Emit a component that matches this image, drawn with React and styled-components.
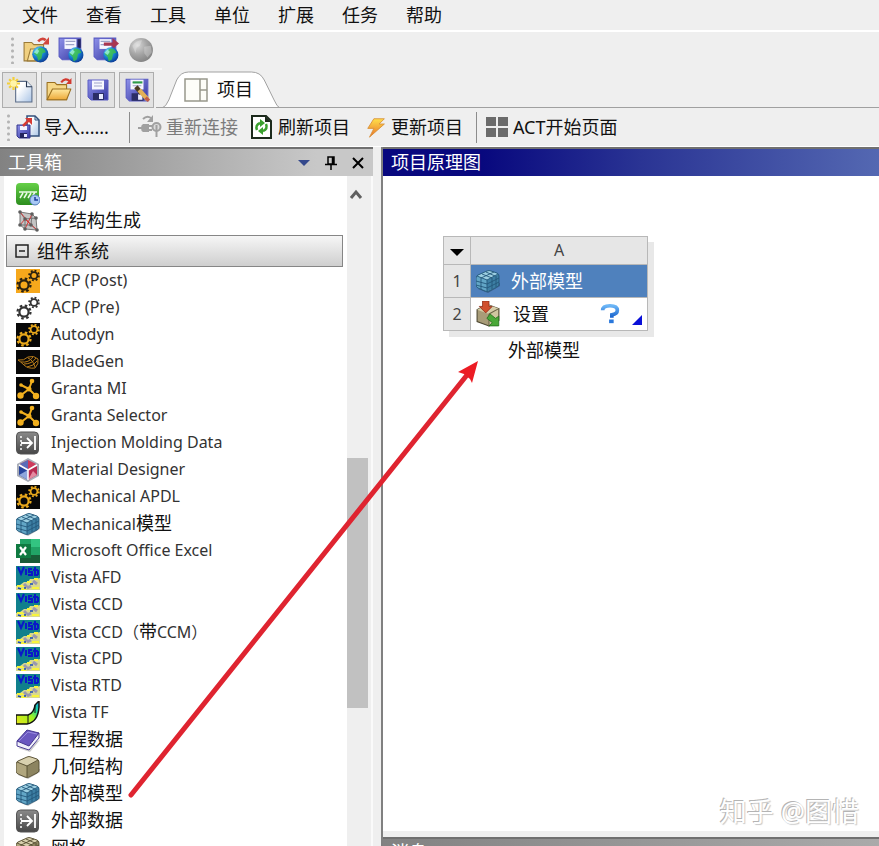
import React from 'react';
import styled, { createGlobalStyle } from 'styled-components';

const GlobalStyle = createGlobalStyle`
  * {
    box-sizing: border-box;
  }

  body {
    margin: 0;
    background: #efefef;
    color: #111;
    font-family: 'Noto Sans', 'Noto Sans CJK SC', sans-serif;
    font-size: 18px;
    line-height: 27px;
  }

  button {
    font: inherit;
    color: inherit;
    background: none;
    border: 0;
    padding: 0;
  }

  svg {
    display: block;
    flex: none;
  }
`;

/* ---------- icons ---------- */

const Icon = ({ size = 24, children }) => (
  <svg width={size} height={size} viewBox="0 0 24 24" aria-hidden="true">
    {children}
  </svg>
);

const Defs = styled.svg`
  position: absolute;
`;

const Gradients = () => (
  <Defs width="0" height="0" aria-hidden="true">
    <defs>
      <radialGradient id="globe" cx="0.35" cy="0.3" r="0.8">
        <stop offset="0" stopColor="#8df" />
        <stop offset="0.45" stopColor="#1787d6" />
        <stop offset="1" stopColor="#0a2f8c" />
      </radialGradient>
      <radialGradient id="globeGrey" cx="0.35" cy="0.3" r="0.8">
        <stop offset="0" stopColor="#d8d8d8" />
        <stop offset="0.5" stopColor="#a4a4a4" />
        <stop offset="1" stopColor="#7e7e7e" />
      </radialGradient>
      <linearGradient id="disk" x1="0" y1="0" x2="1" y2="1">
        <stop offset="0" stopColor="#8f92ea" />
        <stop offset="1" stopColor="#3436a0" />
      </linearGradient>
      <linearGradient id="folder" x1="0" y1="0" x2="0" y2="1">
        <stop offset="0" stopColor="#ffe9a0" />
        <stop offset="1" stopColor="#eda938" />
      </linearGradient>
      <linearGradient id="paper" x1="0" y1="0" x2="1" y2="1">
        <stop offset="0.3" stopColor="#fff" />
        <stop offset="1" stopColor="#a9c4e6" />
      </linearGradient>
      <linearGradient id="green" x1="0" y1="0" x2="0" y2="1">
        <stop offset="0" stopColor="#66d048" />
        <stop offset="1" stopColor="#2c8d1e" />
      </linearGradient>
      <linearGradient id="slate" x1="0" y1="0" x2="0" y2="1">
        <stop offset="0" stopColor="#8a8a8a" />
        <stop offset="1" stopColor="#474747" />
      </linearGradient>
      <linearGradient id="bolt" x1="0" y1="0" x2="0" y2="1">
        <stop offset="0" stopColor="#ffe14a" />
        <stop offset="1" stopColor="#e8702a" />
      </linearGradient>
      <linearGradient id="help" x1="0" y1="0" x2="0" y2="1">
        <stop offset="0" stopColor="#6cb6f6" />
        <stop offset="1" stopColor="#1560cc" />
      </linearGradient>
      <linearGradient id="duct" x1="0" y1="1" x2="1" y2="0">
        <stop offset="0" stopColor="#e8e61a" />
        <stop offset="0.5" stopColor="#a0f020" />
        <stop offset="0.75" stopColor="#18d8a0" />
        <stop offset="1" stopColor="#1890e8" />
      </linearGradient>
    </defs>
  </Defs>
);

const Globe = ({ cx = 16, cy = 16, r = 7.5 }) => (
  <g>
    <circle cx={cx} cy={cy} r={r} fill="url(#globe)" />
    <path
      d={`M${cx - 1} ${cy - 6}q5 0 6 4l-3 1-1 5-3 2-1-4-3-3z`}
      fill="#3cc04a"
      opacity="0.85"
    />
    <path d={`M${cx - 6} ${cy - 2}l3-3 2 2-2 3z`} fill="#9df0e0" opacity="0.8" />
  </g>
);

const Disk = () => (
  <g>
    <path d="M2 2h20v20H5l-3-3z" fill="url(#disk)" stroke="#5a5cc4" />
    <path d="M6 2.500h12v9H6z" fill="#f6f7ff" />
    <path d="M8 5h8M8 8h8" stroke="#9fa4c8" />
    <path d="M7 15h11v7H7z" fill="#2b2d66" />
    <path d="M13 16h4v5h-4z" fill="#e8eaff" />
  </g>
);

const FolderGlobeIcon = () => (
  <Icon size={26}>
    <path d="M1 5h7l2 2h9v15H1z" fill="#f0d080" stroke="#9a7a38" />
    <path d="M4 22l3-11h14l-4 11z" fill="#f8e2a0" stroke="#9a7a38" />
    <path d="M14 4q4-4 7-1" fill="none" stroke="#d2453c" strokeWidth="2.500" />
    <path d="M24 0v7h-6z" fill="#d2453c" />
    <Globe />
  </Icon>
);

const DiskGlobeIcon = ({ arrow }) => (
  <Icon size={26}>
    <path d="M1 1h20v20H4l-3-3z" fill="url(#disk)" stroke="#5a5cc4" />
    <path d="M6 2h11v9H6z" fill="#f6f7ff" />
    <path d="M7 4h9M7 7h8" stroke="#9fa4c8" />
    {arrow ? (
      <path d="M10 5h8V1l6 5-6 5V8h-8z" fill="#a83650" />
    ) : (
      <path d="M18 2h3v8h-3z" fill="#23255e" />
    )}
    <Globe cx={16.500} cy={16.500} r={7} />
  </Icon>
);

const GreyGlobeIcon = () => (
  <Icon size={26}>
    <circle cx="12" cy="12" r="11" fill="url(#globeGrey)" />
    <path d="M4 8q4-5 9-5l-2 5-3 2-1 5zM15 9l6-1 1 6-4 5-3-4z" fill="#fff" opacity="0.25" />
  </Icon>
);

const NewIcon = () => (
  <Icon size={26}>
    <path d="M8 4h10l5 5v14H8z" fill="url(#paper)" stroke="#5a6c88" />
    <path d="M18 4v5h5" fill="#e8f0fa" stroke="#24344e" />
    <path d="M6 0v12M0 6h12M2 2l8 8M10 2l-8 8" stroke="#f4cf3a" strokeWidth="2" />
    <circle cx="6" cy="6" r="3" fill="#fff4a8" />
  </Icon>
);

const OpenIcon = () => (
  <Icon size={26}>
    <g stroke="#9a7020" strokeLinejoin="round">
      <path d="M1 5h7l2 2h9v14H1z" fill="#f6d888" />
      <path d="M6 11h17l-4 10H1z" fill="url(#folder)" />
      <path d="M14 5q4-5 8-1" fill="none" stroke="#d23a30" strokeWidth="2" />
      <path d="M23.500 1v5.500h-5z" fill="#d23a30" stroke="none" />
    </g>
  </Icon>
);

const SaveIcon = () => (
  <Icon>
    <Disk />
  </Icon>
);

const SaveAsIcon = () => (
  <Icon size={26}>
    <Disk />
    <path d="M8 5h9" stroke="#2e9c4a" strokeWidth="2" />
    <path d="M11 9l5 6" stroke="#4a3c24" strokeWidth="4" />
    <path d="M14 12l8 9" stroke="#e2b057" strokeWidth="4" />
    <path d="M20 19l3 3" stroke="#c05a4a" strokeWidth="3" />
  </Icon>
);

const LayoutIcon = () => (
  <Icon>
    <path d="M1 1h22v22H1zM16 1v22M16 12h7" fill="#fdfdf8" stroke="#98988c" strokeWidth="1.500" />
  </Icon>
);

const ImportIcon = () => (
  <Icon>
    <path d="M11 1h8l4 4v16H11z" fill="url(#paper)" stroke="#33507c" strokeWidth="1.500" />
    <path d="M19 1v4h4" fill="none" stroke="#33507c" />
    <path d="M1 10h13v13H3l-2-2z" fill="url(#disk)" stroke="#35378c" />
    <path d="M4 11h7v4H4z" fill="#f2f3ff" />
    <path d="M4 18h7v5H4z" fill="#23255e" />
    <path d="M8 19h3v3H8z" fill="#e8eaff" />
    <path d="M7 11l6-6" stroke="#d63b34" strokeWidth="2.500" />
    <path d="M9 3h7v7z" fill="#d63b34" />
  </Icon>
);

const ReconnectIcon = () => (
  <Icon>
    <g fill="#a0a0a0" stroke="#a0a0a0">
      <path d="M5 9h6v8H5q-2-1-2-4t2-4z" stroke="none" />
      <path d="M0 13h5M11 11h3M11 15h3" strokeWidth="2" />
      <path d="M5 4q4-4 8-1" fill="none" strokeWidth="2" />
      <path d="M15 0v7H9z" stroke="none" />
      <circle cx="18.500" cy="12" r="4" fill="#dcdcdc" strokeWidth="2" />
      <path d="M18.500 10v12" strokeWidth="2" />
    </g>
  </Icon>
);

const RefreshIcon = () => (
  <Icon>
    <path d="M2 1h14l5 5v17H2z" fill="#fff" stroke="#1c2a1c" strokeWidth="2" />
    <path d="M15 1v6h6z" fill="#1c2a1c" />
    <path d="M7 15q-2-5 3-7M16 9q2 5-3 7" fill="none" stroke="#3aa02e" strokeWidth="2.500" />
    <path d="M10 4l5 4-5 4zM13 12v8l-5-4z" fill="#3aa02e" />
  </Icon>
);

const BoltIcon = () => (
  <Icon size={21}>
    <path d="M9 2h12l-6 6h6L4 23l5-10H2z" fill="url(#bolt)" stroke="#d89038" strokeLinejoin="round" />
  </Icon>
);

const TilesIcon = () => (
  <Icon>
    <path d="M1 2h10v9H1zM13 2h10v9H13zM1 13h10v9H1zM13 13h10v9H13z" fill="#6b6b6b" />
  </Icon>
);

const MotionIcon = () => (
  <Icon>
    <rect x="0" y="1" width="23" height="22" rx="4" fill="url(#green)" />
    <path d="M3 10h18M4 16l3-5M8 16l3-5M12 16l3-5M16 15l3-5" stroke="#eafbe6" strokeWidth="1.500" />
    <circle cx="19" cy="18" r="5" fill="#a8c8f4" stroke="#5a82c8" />
    <path d="M19 15v3h3" fill="none" stroke="#1c3c9c" strokeWidth="1.500" />
  </Icon>
);

const substructureNodes = [[4, 3], [16, 5], [20, 9], [21, 21], [9, 20], [4, 16], [9, 10], [15, 16]];

const SubstructureIcon = () => (
  <Icon>
    <path d="M4 3l12 2 4 4 1 12-12-1-5-4z" fill="#c4c4c4" stroke="#777" />
    <path d="M4 3l5 7 11-1M9 10v10M16 5l-1 11 6 5M15 16H4" fill="none" stroke="#777" />
    <path d="M4 3l11 13M9 10l12 11M16 5L9 20M4 16l5-6 6 6" fill="none" stroke="#d23c3c" />
    <g fill="#5e5e5e">
      {substructureNodes.map(([x, y]) => (
        <circle key={`${x}-${y}`} cx={x} cy={y} r="1.800" />
      ))}
    </g>
  </Icon>
);

const GearsIcon = ({ bg, color }) => (
  <Icon>
    <path d="M0 0h24v24H0z" fill={bg} />
    <g fill="none" stroke={color}>
      <circle cx="8" cy="16" r="4.600" strokeWidth="2.200" />
      <circle cx="8" cy="16" r="6.500" strokeWidth="2.200" strokeDasharray="2.550 2.550" />
      <circle cx="18" cy="6.500" r="3.400" strokeWidth="1.800" />
      <circle cx="18" cy="6.500" r="4.900" strokeWidth="1.800" strokeDasharray="1.920 1.920" />
    </g>
  </Icon>
);

const BladeIcon = () => (
  <Icon>
    <path d="M0 0h24v24H0z" fill="#080808" />
    <g fill="none" stroke="#b87c1a">
      <path d="M2 10q6 1 10-3 6-2 10 2 1 5-3 9-7 1-11-3-3-3-6-5z" />
      <path d="M5 12q8 1 12-5M8 14q8 0 12-6M11 17q7-1 10-6M12 8q5 2 7 9" />
    </g>
  </Icon>
);

const GrantaIcon = () => (
  <Icon>
    <path d="M0 0h24v24H0z" fill="#080808" />
    <path d="M4 19l9-7 7 7M13 12l3-8M13 12L5 8" stroke="#f2b01e" strokeWidth="2" fill="none" />
    <g fill="#f2b01e">
      <circle cx="4.500" cy="18.500" r="3.200" />
      <circle cx="20" cy="19" r="3.200" />
      <circle cx="16" cy="4" r="2.300" />
      <circle cx="5" cy="8" r="1.800" />
      <circle cx="13" cy="12" r="2.500" />
    </g>
  </Icon>
);

const DataArrowIcon = () => (
  <Icon>
    <rect x="0.500" y="1" width="22" height="22" rx="4" fill="url(#slate)" stroke="#555" />
    <path d="M5 5v14" stroke="#fff" strokeWidth="1.500" strokeDasharray="2 2" />
    <path d="M5 12h10M11 7l5 5-5 5" fill="none" stroke="#fff" strokeWidth="1.800" />
    <path d="M19 5v14" stroke="#fff" strokeWidth="1.800" />
  </Icon>
);

const MaterialIcon = () => (
  <Icon>
    <path d="M12 0l11 6v12l-11 6-11-6V6z" fill="#a9adb8" />
    <path d="M12 2l8 4-8 6-8-6z" fill="#cf3a5c" />
    <path d="M3 7l9 5v10l-9-5z" fill="#27449c" />
    <path d="M21 7l-9 5v10l9-5z" fill="#b82a50" />
    <path d="M12 2v10L4 6z" fill="#5a6cb8" />
    <path d="M3 17l9-5v10z" fill="#8fa6dc" />
    <path d="M12 22l9-5-4-4z" fill="#e48aa0" />
    <path d="M12 12v10M12 12l9-5M12 12L3 7" stroke="#fff" strokeWidth="1.500" />
  </Icon>
);

const palettes = {
  blue: { top: '#9ccfe2', left: '#62a6c6', right: '#3d7fa4', line: '#24587a' },
  tan: { top: '#d8d0ae', left: '#b0a67e', right: '#8c8460', line: '#544c30' },
};

const BlockIcon = ({ tone = 'tan', mesh }) => {
  const c = palettes[tone];
  return (
    <Icon>
      <path d="M2 20l10 4 12-7v-3z" fill="#000" opacity="0.25" />
      <path d="M0 9q0-2 2-3l9-4q2-1 4 0l6 2q2 1 2 3v8q0 2-2 3l-8 4q-2 1-4 0l-7-3q-2-1-2-3z" fill={c.left} />
      <path d="M1 7l10-5q2-1 4 0l7 3-10 6z" fill={c.top} />
      <path d="M11 11l12-6v10q0 2-2 3l-10 4z" fill={c.right} />
      <path
        d="M0 9q0-2 2-3l9-4q2-1 4 0l6 2q2 1 2 3v8q0 2-2 3l-8 4q-2 1-4 0l-7-3q-2-1-2-3zM1 7l10 4 11-6M11 11v11"
        fill="none"
        stroke={c.line}
        strokeWidth="0.900"
      />
      {mesh && (
        <path
          d="M0 12l11 3 12-6M0 16l11 3 12-6M5 9v11M16 9v11M20 7v11M6 5l10 4M10 3l9 4M5 9l13-6"
          fill="none"
          stroke={c.line}
          strokeWidth="0.900"
        />
      )}
    </Icon>
  );
};

const SetupIcon = () => (
  <Icon size={26}>
    <path d="M1 8l9-5 11 4v11l-9 5-11-4z" fill="#a89c78" stroke="#4c4630" />
    <path d="M1 8l9-5 11 4-9 5z" fill="#d6cda8" />
    <path d="M12 12l9-5v11l-9 5z" fill="#cfc6a0" stroke="#6c6448" />
    <path d="M6 0h6v5h3l-6 6-6-6h3z" fill="#d0502e" stroke="#8c2c18" strokeWidth="0.700" />
    <path d="M13 12l5 4 3-2v9h-9l3-3-5-4z" fill="#4aa838" stroke="#216c1a" strokeWidth="0.700" />
  </Icon>
);

const ExcelIcon = () => (
  <Icon>
    <path d="M4 0h20v24H4z" fill="#21a366" />
    <path d="M15 0h9v8h-9z" fill="#33c481" />
    <path d="M4 8h11v8H4z" fill="#107c41" />
    <path d="M4 16h20v8H4z" fill="#185c37" />
    <path d="M15 8h9v8h-9z" fill="#21a366" />
    <path d="M0 5h15v14H0z" fill="#0f7a41" />
    <path d="M4 8l6 8M10 8l-6 8" stroke="#fff" strokeWidth="2.200" />
  </Icon>
);

const VistaIcon = () => (
  <Icon>
    <path d="M0 0h24v24H0z" fill="#10808c" />
    <path
      d="M2 1l3 7 3-7M10 3v6M16 3h-3v3h3v3h-4M19 1v8h3M22 4v5M17 4h5"
      fill="none"
      stroke="#0a18c8"
      strokeWidth="2"
    />
    <path d="M0 24v-4l4-1 4-3h4l2-3h6l4-1v12z" fill="#d8d890" />
    <path d="M1 20h8M3 23h7M11 16h4M16 22h7M18 13h4" stroke="#f8f43c" strokeWidth="2" />
    <path d="M8 18l3 3M17 15l4 3M11 22l4-2" stroke="#9a98b0" strokeWidth="3" />
    <path d="M2 22l3 1M14 18h3M8 22h2" stroke="#1648b8" strokeWidth="1.500" />
  </Icon>
);

const DuctIcon = () => (
  <Icon>
    <path
      d="M0 14h12q6-2 7-10l4-4v6q-1 15-12 17H0z"
      fill="url(#duct)"
      stroke="#111"
      strokeWidth="1.500"
    />
    <path d="M12 14v9M19 4v8" stroke="#111" />
  </Icon>
);

const BookIcon = () => (
  <Icon>
    <path d="M2 20l12 4 10-12z" fill="#000" opacity="0.2" />
    <path d="M1 13v5l12 4 10-12V5z" fill="#f0f0fa" stroke="#4c3f96" />
    <path d="M1 13L11 2l12 3-10 13z" fill="#6a58c0" stroke="#453890" />
    <path d="M3 13l9-9 9 2" fill="none" stroke="#9a8ce0" />
  </Icon>
);

const HelpIcon = () => (
  <Icon size={22}>
    <path
      d="M4 8q0-5 8-5t8 5q0 4-6 5v3"
      fill="none"
      stroke="url(#help)"
      strokeWidth="4"
    />
    <path d="M11 18h5v4h-5z" fill="#2a78dc" />
  </Icon>
);

const PinIcon = () => (
  <svg width="14" height="14" viewBox="0 0 14 14" aria-hidden="true">
    <path d="M4 1h6v7H4zM8.500 1v7M1 8.500h12M7 9v5" fill="none" stroke="#000" strokeWidth="1.500" />
  </svg>
);

const CloseIcon = () => (
  <svg width="12" height="12" viewBox="0 0 12 12" aria-hidden="true">
    <path d="M1 1l10 10M11 1L1 11" stroke="#000" strokeWidth="2" />
  </svg>
);

/* ---------- layout ---------- */

const Window = styled.div`
  position: relative;
  display: flex;
  flex-direction: column;
  height: 100vh;
  overflow: hidden;
`;

const MenuBar = styled.nav`
  display: flex;
  height: 32px;
  padding: 0 8px;
  border-bottom: 2px solid #fff;
`;

const MenuItem = styled.button`
  padding: 0 14px;
`;

const Toolbar = styled.div`
  display: flex;
  align-items: center;
  height: 38px;
`;

const QuickBar = styled(Toolbar)`
  width: 162px;
  gap: 8px;
  padding-left: 11px;
  border-bottom: 2px solid #f8f8f8;
`;

const Grip = styled.span`
  width: 3px;
  height: 28px;
  background: radial-gradient(circle, #b4b4b4 1px, transparent 2px) 0 0 / 3px 6px;
`;

const IconButton = styled.button`
  display: grid;
  place-items: center;
  width: 27px;
  height: 28px;
`;

const FileBar = styled(Toolbar)`
  align-items: flex-end;
  gap: 4px;
  padding-left: 2px;
  background: linear-gradient(#a0a0a0, #a0a0a0) right bottom / calc(100% - 156px) 1px no-repeat;
`;

const FileButton = styled.button`
  display: grid;
  place-items: center;
  width: 35px;
  height: 36px;
  border: 1px solid #adadad;
  background: #e3e3e3;
`;

const Tab = styled.button`
  position: relative;
  display: flex;
  align-items: center;
  gap: 9px;
  height: 37px;
  padding: 0 27px 0 26px;
`;

const TabShape = styled.svg`
  position: absolute;
  inset: 0;
  z-index: -1;
`;

const CommandBar = styled(Toolbar)`
  height: 39px;
  padding: 0 7px;
  border-bottom: 1px solid #fff;
`;

const Command = styled.button`
  display: flex;
  align-items: center;
  gap: 4px;
  margin-left: ${(p) => p.$space || 6}px;
  white-space: nowrap;

  &:disabled {
    color: #7c7c7c;
  }
`;

const Divider = styled.span`
  width: 1px;
  height: 31px;
  margin-left: ${(p) => p.$space}px;
  background: #8c8c8c;
`;

const Workspace = styled.div`
  display: flex;
  flex: 1;
  gap: 8px;
  min-height: 0;
`;

const Toolbox = styled.aside`
  display: flex;
  flex-direction: column;
  flex: none;
  width: 373px;
`;

const headerFills = {
  active: 'linear-gradient(90deg, #08087e 20%, #2a3494 52%, #5468b2)',
  idle: 'linear-gradient(90deg, #828282, #c8c8c8 85%)',
  wide: 'linear-gradient(90deg, #828282, #aaaaaa)',
};

const PanelHeader = styled.header`
  display: flex;
  align-items: center;
  flex: none;
  height: 29px;
  padding: 0 8px;
  border-top: 2px solid #707070;
  color: #fff;
  background: ${(p) => headerFills[p.$fill]};

  h2 {
    flex: 1;
    margin: 0;
    font-size: 18px;
    font-weight: 400;
  }
`;

const HeaderButton = styled.button`
  display: grid;
  place-items: center;
  width: 27px;
  height: 24px;

  &:last-child {
    margin-right: -6px;
  }
`;

const Caret = styled.span`
  border: ${(p) => p.$size}px solid transparent;
  border-top-color: ${(p) => p.$color};
  border-bottom: 0;
`;

const ToolboxBody = styled.div`
  display: flex;
  flex: 1;
  min-height: 0;
  border-right: 2px solid #fafafa;
`;

const Tree = styled.div`
  flex: 1;
  min-width: 0;
  margin-left: 4px;
  padding: 4px 4px 0 2px;
  overflow: hidden;
  background: #fff;
`;

const TreeList = styled.ul`
  margin: 0;
  padding: 0;
  list-style: none;
`;

const TreeItem = styled.li`
  display: flex;
  align-items: center;
  gap: 11px;
  height: 27px;
  padding-left: 10px;
  font-size: ${(p) => (p.$latin ? 16 : 18)}px;
  white-space: nowrap;
  color: ${(p) => (p.$latin ? '#333' : '#111')};

  span {
    font-size: 18px;
    color: #111;
  }
`;

const GroupButton = styled.button`
  display: flex;
  align-items: center;
  gap: 8px;
  width: 100%;
  height: 32px;
  margin-top: 1px;
  padding-left: 8px;
  border: 1px solid #868686;
  background: linear-gradient(#f6f6f6, #cfcfcf);
`;

const Scrollbar = styled.div`
  display: flex;
  flex-direction: column;
  width: 24px;
  padding-right: 3px;
  background: #efefef;
`;

const ScrollThumb = styled.div`
  width: 100%;
  height: 250px;
  margin-top: 245px;
  background: #c1c1c1;
`;

const Main = styled.main`
  display: flex;
  flex-direction: column;
  flex: 1;
  min-width: 0;
  border-left: 2px solid #808080;
`;

const Schematic = styled.section`
  flex: 1;
  padding: 60px 60px 0;
  background: #fff;
`;

const System = styled.figure`
  width: 205px;
  margin: 0;

  figcaption {
    margin-top: 6px;
    padding-right: 3px;
    text-align: center;
  }
`;

const Cells = styled.table`
  width: 100%;
  border-collapse: collapse;
  table-layout: fixed;
  background: #fff;
  box-shadow: 6px 6px 0 #e8e8e8;

  th,
  td {
    height: 33px;
    padding: 0;
    border: 1px solid #b8b8b8;
    font-weight: 400;
  }

  th {
    width: 27px;
    background: #e6e6e6;
    font-size: 16px;
    color: #444;
  }

  thead th {
    height: 27px;
  }

  thead th + th {
    width: auto;
  }
`;

const Cell = styled.div`
  position: relative;
  display: flex;
  align-items: center;
  gap: 11px;
  height: 32px;
  padding: 0 26px 0 5px;
  color: ${(p) => (p.$selected ? '#fff' : '#111')};
  background: ${(p) => (p.$selected ? '#4f81bd' : '#fff')};

  > span {
    flex: 1;
  }
`;

const Corner = styled.i`
  position: absolute;
  right: 5px;
  bottom: 5px;
  border: 5px solid #0a10d8;
  border-top-color: transparent;
  border-left-color: transparent;
`;

const Messages = styled.section`
  flex: none;
  height: 9px;
  margin-top: 6px;
  overflow: hidden;
`;

const Arrow = styled.svg`
  position: absolute;
  top: 0;
  left: 0;
  pointer-events: none;
`;

const Watermark = styled.p`
  position: absolute;
  right: 20px;
  bottom: 16px;
  margin: 0;
  font-size: 27px;
  line-height: 36px;
  color: #fff;
  text-shadow: -1px -1px 0 #b4b4b4, 1px 1px 1px #c8c8c8;
`;

/* ---------- data ---------- */

const menus = ['文件', '查看', '工具', '单位', '扩展', '任务', '帮助'];

const analysisItems = [
  { name: '运动', icon: <MotionIcon /> },
  { name: '子结构生成', icon: <SubstructureIcon /> },
];

const componentItems = [
  { name: 'ACP (Post)', icon: <GearsIcon bg="#f6a81c" color="#2a2110" />, latin: true },
  { name: 'ACP (Pre)', icon: <GearsIcon bg="#fff" color="#333" />, latin: true },
  { name: 'Autodyn', icon: <GearsIcon bg="#080808" color="#e8a81c" />, latin: true },
  { name: 'BladeGen', icon: <BladeIcon />, latin: true },
  { name: 'Granta MI', icon: <GrantaIcon />, latin: true },
  { name: 'Granta Selector', icon: <GrantaIcon />, latin: true },
  { name: 'Injection Molding Data', icon: <DataArrowIcon />, latin: true },
  { name: 'Material Designer', icon: <MaterialIcon />, latin: true },
  { name: 'Mechanical APDL', icon: <GearsIcon bg="#080808" color="#e8a81c" />, latin: true },
  { name: <>Mechanical<span>模型</span></>, icon: <BlockIcon tone="blue" mesh />, latin: true },
  { name: 'Microsoft Office Excel', icon: <ExcelIcon />, latin: true },
  { name: 'Vista AFD', icon: <VistaIcon />, latin: true },
  { name: 'Vista CCD', icon: <VistaIcon />, latin: true },
  { name: <>Vista CCD（<span>带</span>CCM）</>, icon: <VistaIcon />, latin: true },
  { name: 'Vista CPD', icon: <VistaIcon />, latin: true },
  { name: 'Vista RTD', icon: <VistaIcon />, latin: true },
  { name: 'Vista TF', icon: <DuctIcon />, latin: true },
  { name: '工程数据', icon: <BookIcon /> },
  { name: '几何结构', icon: <BlockIcon /> },
  { name: '外部模型', icon: <BlockIcon tone="blue" mesh /> },
  { name: '外部数据', icon: <DataArrowIcon /> },
  { name: '网格', icon: <BlockIcon mesh /> },
];

const ItemList = ({ items }) => (
  <TreeList>
    {items.map((item, index) => (
      <TreeItem key={index} $latin={item.latin}>
        {item.icon}
        <div>{item.name}</div>
      </TreeItem>
    ))}
  </TreeList>
);

const App = () => {
  return (
    <Window>
      <GlobalStyle />
      <Gradients />
      <MenuBar>
        {menus.map((menu) => (
          <MenuItem key={menu}>{menu}</MenuItem>
        ))}
      </MenuBar>

      <QuickBar>
        <Grip />
        <IconButton aria-label="打开"><FolderGlobeIcon /></IconButton>
        <IconButton aria-label="保存"><DiskGlobeIcon /></IconButton>
        <IconButton aria-label="发送"><DiskGlobeIcon arrow /></IconButton>
        <IconButton aria-label="网络" disabled><GreyGlobeIcon /></IconButton>
      </QuickBar>

      <FileBar>
        <FileButton aria-label="新建"><NewIcon /></FileButton>
        <FileButton aria-label="打开"><OpenIcon /></FileButton>
        <FileButton aria-label="保存"><SaveIcon /></FileButton>
        <FileButton aria-label="另存为"><SaveAsIcon /></FileButton>
        <Tab>
          <TabShape width="100%" height="37" viewBox="0 0 124 37" preserveAspectRatio="none">
            <path
              d="M4 37Q8 36 11 29L19 9Q23 1 31 1H95Q104 1 108 9L118 29Q121 36 124 37"
              fill="#fff"
              stroke="#a0a0a0"
            />
          </TabShape>
          <LayoutIcon />
          项目
        </Tab>
      </FileBar>

      <CommandBar>
        <Grip />
        <Command><ImportIcon />导入......</Command>
        <Divider $space={20} />
        <Command disabled $space={8}><ReconnectIcon />重新连接</Command>
        <Command $space={12}><RefreshIcon />刷新项目</Command>
        <Command $space={16}><BoltIcon />更新项目</Command>
        <Divider $space={13} />
        <Command $space={8}><TilesIcon />ACT开始页面</Command>
      </CommandBar>

      <Workspace>
        <Toolbox>
          <PanelHeader $fill="idle">
            <h2>工具箱</h2>
            <HeaderButton aria-label="选项"><Caret $size={6} $color="#34488c" /></HeaderButton>
            <HeaderButton aria-label="固定"><PinIcon /></HeaderButton>
            <HeaderButton aria-label="关闭"><CloseIcon /></HeaderButton>
          </PanelHeader>
          <ToolboxBody>
            <Tree>
              <ItemList items={analysisItems} />
              <GroupButton aria-expanded="true">
                <svg width="14" height="14" viewBox="0 0 14 14" aria-hidden="true">
                  <path d="M1 1h12v12H1zM4 7h6" fill="none" stroke="#222" strokeWidth="1.500" />
                </svg>
                组件系统
              </GroupButton>
              <ItemList items={componentItems} />
            </Tree>
            <Scrollbar>
              <svg width="18" height="37" viewBox="0 0 18 37" aria-hidden="true">
                <path d="M4 22l5-6 5 6" fill="none" stroke="#606060" strokeWidth="3" />
              </svg>
              <ScrollThumb />
            </Scrollbar>
          </ToolboxBody>
        </Toolbox>

        <Main>
          <PanelHeader $fill="active">
            <h2>项目原理图</h2>
          </PanelHeader>
          <Schematic>
            <System>
              <Cells>
                <thead>
                  <tr>
                    <th><Caret as="button" aria-label="系统菜单" $size={7} $color="#000" /></th>
                    <th>A</th>
                  </tr>
                </thead>
                <tbody>
                  <tr>
                    <th>1</th>
                    <td><Cell $selected><BlockIcon tone="blue" mesh /><span>外部模型</span></Cell></td>
                  </tr>
                  <tr>
                    <th>2</th>
                    <td><Cell><SetupIcon /><span>设置</span><HelpIcon /><Corner /></Cell></td>
                  </tr>
                </tbody>
              </Cells>
              <figcaption>外部模型</figcaption>
            </System>
          </Schematic>
          <Messages>
            <PanelHeader $fill="wide"><h2>消息</h2></PanelHeader>
          </Messages>
        </Main>
      </Workspace>

      <Arrow width="500" height="846" aria-hidden="true">
        <path d="M131 795L467 375" stroke="#df2430" strokeWidth="5" strokeLinecap="round" />
        <path d="M478 361l-20 11 6 2 6 5 2 4z" fill="#ec1c24" />
      </Arrow>
      <Watermark>知乎 @图惜</Watermark>
    </Window>
  );
};

export default App;
